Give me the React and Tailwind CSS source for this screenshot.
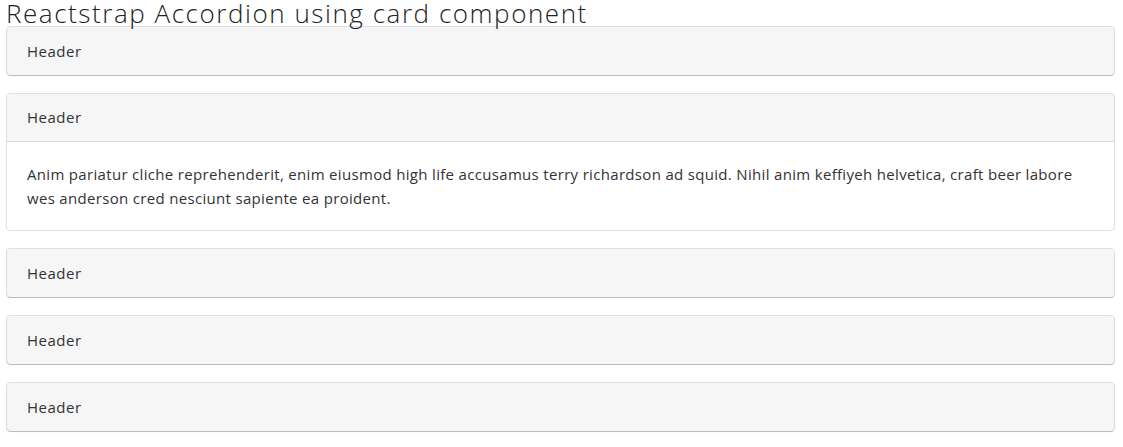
import React, { useState } from 'react';

const items = [
  { id: 1 },
  {
    id: 2,
    body: 'Anim pariatur cliche reprehenderit, enim eiusmod high life accusamus terry richardson ad squid. Nihil anim keffiyeh helvetica, craft beer labore wes anderson cred nesciunt sapiente ea proident.',
  },
  { id: 3 },
  { id: 4 },
  { id: 5 },
];

const AccordionCard = ({ item, open, onToggle }) => (
  <div className="mb-[17px] rounded border border-[#e0e0e0] bg-white">
    <button
      onClick={onToggle}
      className={`flex h-12 w-full items-center rounded-t bg-[#f6f6f6] px-5 text-left text-[15px] tracking-[0.5px] text-[#333] ${
        open ? 'border-b border-[#dcdcdc]' : 'rounded-b shadow-[0_1px_1px_rgba(0,0,0,0.18)]'
      }`}
    >
      Header
    </button>
    {open && (
      <div className="px-5 pt-[20px] pb-[20px] text-[15px] leading-6 tracking-[0.32px] text-[#333]">
        {item.body}
      </div>
    )}
  </div>
);

const App = () => {
  const [openId, setOpenId] = useState(2);

  return (
    <div className="min-h-screen bg-white font-['Open_Sans',sans-serif]">
      <h3 className="px-[6px] pt-[1px] text-[26px] leading-[25px] tracking-[1.55px] font-light text-[#222]">
        Reactstrap Accordion using card component
      </h3>
      <div className="pl-[6px] pr-2">
        {items.map((item) => (
          <AccordionCard
            key={item.id}
            item={item}
            open={openId === item.id}
            onToggle={() => setOpenId(openId === item.id ? null : item.id)}
          />
        ))}
      </div>
    </div>
  );
};

export default App;
